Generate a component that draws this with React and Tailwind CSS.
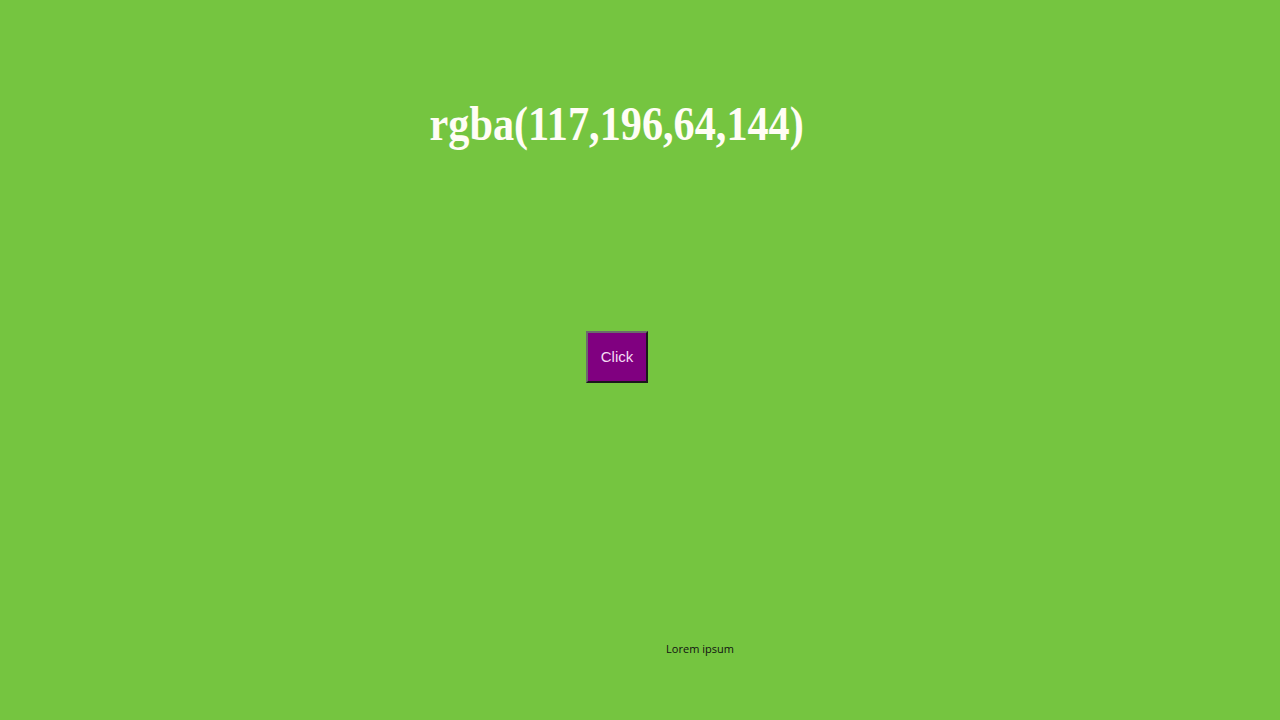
import React from 'react';

const App = () => {
  return (
    <div className="h-screen w-full overflow-hidden bg-[#75c540]">
      <div className="flex w-[1234px] flex-col items-center">
        <h1 className="mt-[100px] origin-center scale-x-88 whitespace-nowrap font-['Liberation_Serif',serif] text-[48px] font-bold leading-none text-[#fffdf5]">
          rgba(117,196,64,144)
        </h1>

        <button className="mt-[183px] h-[52px] w-[62px] border-2 border-t-[#6b6b6b] border-l-[#6b6b6b] border-b-[#1a1a1a] border-r-[#1a1a1a] bg-[#800080] font-['Liberation_Sans',Arial,sans-serif] text-[15px] text-[#f5dcf5]">
          Click
        </button>

        <p className="ml-[166px] mt-[258px] font-['Open_Sans','Noto_Sans',sans-serif] text-[11px] leading-[15px] text-[#111]">
          Lorem ipsum
        </p>
      </div>
    </div>
  );
};

export default App;
